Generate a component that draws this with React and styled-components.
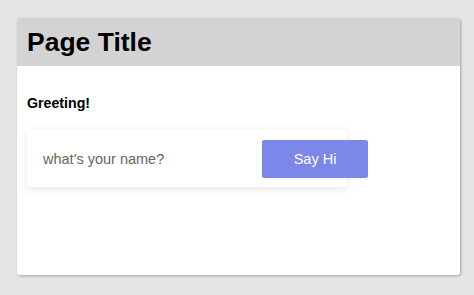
import React, { useState } from "react";
import styled, { createGlobalStyle } from "styled-components";

const GlobalStyle = createGlobalStyle`
  html, body {
    margin: 0;
    padding: 0;
    background: #e6e6e6;
    font-family: "Liberation Sans", Arial, sans-serif;
  }
`;

const App = () => {
  const [name, setName] = useState("");

  return (
    <>
      <GlobalStyle />
      <StPage>
        <StCard>
          <StHeader>
            <StTitle>Page Title</StTitle>
          </StHeader>
          <StBody>
            <StGreeting>Greeting!</StGreeting>
            <StForm onSubmit={(e) => e.preventDefault()}>
              <StInput
                type="text"
                placeholder="what's your name?"
                value={name}
                onChange={(e) => setName(e.target.value)}
              />
              <StButton type="submit">Say Hi</StButton>
            </StForm>
          </StBody>
        </StCard>
      </StPage>
    </>
  );
};

export default App;

const StPage = styled.div`
  padding: 18px 14px 20px 17px;
`;

const StCard = styled.div`
  width: 443px;
  height: 257px;
  background: #ffffff;
  border-radius: 3px;
  overflow: hidden;
  box-shadow: 1px 1px 3px rgba(0, 0, 0, 0.3);
`;

const StHeader = styled.div`
  height: 48px;
  background: #d3d3d3;
  display: flex;
  align-items: center;
  padding-left: 10px;
`;

const StTitle = styled.h1`
  margin: 0;
  font-size: 26.5px;
  font-weight: 700;
  color: #000;
`;

const StBody = styled.div`
  padding: 29px 10px 0 10px;
`;

const StGreeting = styled.h3`
  margin: 0 0 18px 0;
  font-size: 14.2px;
  font-weight: 700;
  line-height: 17px;
  color: #000;
`;

const StForm = styled.form`
  width: 320px;
  height: 57px;
  display: flex;
  align-items: center;
  background: #fff;
  border-radius: 3px;
  box-shadow: 0 2px 8px rgba(0, 0, 0, 0.1);
`;

const StInput = styled.input`
  flex: 0 0 235px;
  width: 235px;
  min-width: 0;
  box-sizing: border-box;
  height: 38px;
  margin: 0;
  border: none;
  outline: none;
  padding: 0 16px;
  font-family: "Liberation Sans", Arial, sans-serif;
  font-size: 14.5px;
  color: #333;
  background: transparent;

  &::placeholder {
    color: #666;
  }
`;

const StButton = styled.button`
  flex: 0 0 106px;
  box-sizing: border-box;
  height: 38px;
  margin: 0;
  padding: 0;
  border: none;
  border-radius: 2px;
  background: #7c88e9;
  color: #fff;
  font-family: "Liberation Sans", Arial, sans-serif;
  font-size: 14.5px;
  cursor: pointer;
`;
